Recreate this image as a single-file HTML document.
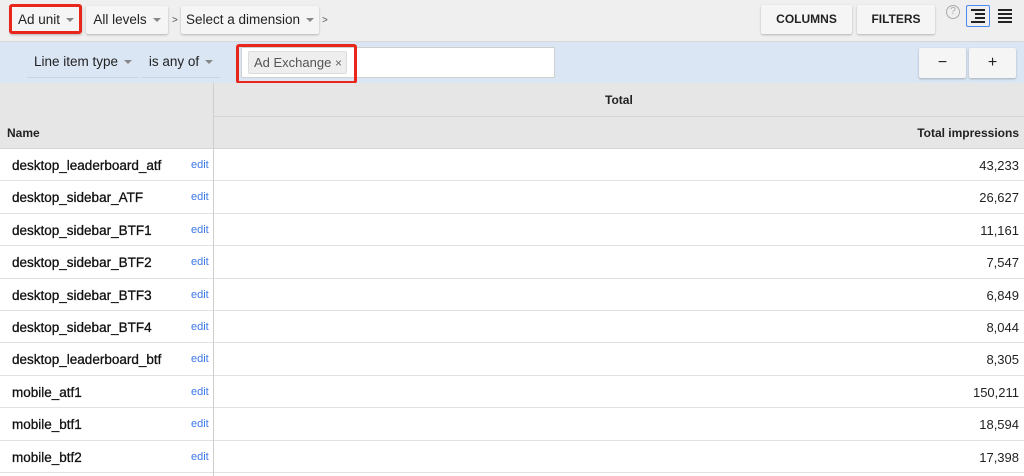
<!DOCTYPE html>
<html><head><style>
*{box-sizing:border-box;margin:0;padding:0}
body{width:1024px;height:476px;overflow:hidden;background:#fff;font-family:"Liberation Sans",Arial,sans-serif;font-size:13px;color:#222;position:relative}
.abs{position:absolute}
.top{left:0;top:0;width:1024px;height:42px;background:#efefef;border-bottom:1px solid #d8d8d8}
.btn{position:absolute;background:#f5f5f5;border-radius:2px;box-shadow:0 1px 2px rgba(0,0,0,.25);font-size:13.5px;line-height:28px;text-align:center;color:#222}
.car{display:inline-block;width:0;height:0;border-left:4px solid transparent;border-right:4px solid transparent;border-top:4px solid #888;vertical-align:middle;margin-left:6px}
.red{position:absolute;border:3px solid #e8261c;border-radius:3px}
.fb{left:0;top:42px;width:1024px;height:41px;background:#dbe6f5}
.hdr{left:0;top:83px;width:1024px;height:66px;background:#e6e6e6}
.row{position:absolute;left:0;width:1024px;height:32.4px;border-bottom:1px solid #e2e2e2;font-size:13px}
.row .n{position:absolute;left:12px;top:9px;font-size:13.5px;color:#111;-webkit-text-stroke:0.3px #111}
.row .e{position:absolute;left:191px;top:10px;font-size:11px;color:#3b78e7}
.row .v{position:absolute;right:5px;top:9px}
</style></head><body>
<div class="abs top"></div>
<div class="btn" style="left:10px;top:6px;width:72px">Ad unit<span class="car"></span></div>
<div class="red" style="left:9px;top:4px;width:73px;height:30px"></div>
<div class="btn" style="left:86px;top:6px;width:82px">All levels<span class="car"></span></div>
<div class="abs" style="left:172px;top:15px;font-size:10px;color:#555">&gt;</div>
<div class="btn" style="left:181px;top:6px;width:138px">Select a dimension<span class="car"></span></div>
<div class="abs" style="left:322px;top:15px;font-size:10px;color:#555">&gt;</div>
<div class="btn" style="left:761px;top:5px;width:91px;font-weight:bold;font-size:12px;line-height:29px">COLUMNS</div>
<div class="btn" style="left:857px;top:5px;width:78px;font-weight:bold;font-size:12px;line-height:29px">FILTERS</div>
<div class="abs" style="left:946px;top:5px;width:14px;height:14px;border:1px solid #aaa;border-radius:50%;font-size:10px;color:#aaa;text-align:center;line-height:12px">?</div>
<div class="abs" style="left:966px;top:5px;width:24px;height:22px;border:1px solid #4a8af4;border-radius:2px"></div>
<svg class="abs" style="left:970px;top:8px" width="16" height="16"><g stroke="#222" stroke-width="2"><line x1="1" y1="2" x2="15" y2="2"/><line x1="5" y1="6" x2="15" y2="6"/><line x1="5" y1="10" x2="15" y2="10"/><line x1="1" y1="14" x2="15" y2="14"/></g></svg>
<svg class="abs" style="left:997px;top:8px" width="16" height="16"><g stroke="#222" stroke-width="2"><line x1="1" y1="2" x2="15" y2="2"/><line x1="1" y1="6" x2="15" y2="6"/><line x1="1" y1="10" x2="15" y2="10"/><line x1="1" y1="14" x2="15" y2="14"/></g></svg>

<div class="abs fb"></div>
<div class="abs" style="left:27px;top:46px;width:112px;height:32px;border-bottom:1px solid #c9d3e2;line-height:32px;text-align:center;font-size:13.5px">Line item type<span class="car"></span></div>
<div class="abs" style="left:142px;top:46px;width:78px;height:32px;border-bottom:1px solid #c9d3e2;line-height:32px;text-align:center;font-size:13.5px">is any of<span class="car"></span></div>
<div class="abs" style="left:241px;top:47px;width:314px;height:31px;background:#fff;border:1px solid #d0d0d0"></div>
<div class="abs" style="left:248px;top:51px;width:99px;height:23px;background:#eee;border:1px solid #ddd;border-radius:2px;line-height:21px;padding-left:5px;color:#555">Ad Exchange <span style="font-size:12px;color:#666">×</span></div>
<div class="red" style="left:236px;top:44px;width:121px;height:40px"></div>
<div class="btn" style="left:919px;top:48px;width:47px;height:30px;line-height:30px;font-size:16px">−</div>
<div class="btn" style="left:969px;top:48px;width:47px;height:30px;line-height:30px;font-size:16px">+</div>

<div class="abs hdr"></div>
<div class="abs" style="left:214px;top:116px;width:810px;height:1px;background:#d5d5d5"></div>
<div class="abs" style="left:213px;top:83px;width:1px;height:393px;background:#cfcfcf;z-index:2"></div>
<div class="abs" style="left:605px;top:93px;font-weight:bold;font-size:12px">Total</div>
<div class="abs" style="left:7px;top:126px;font-weight:bold;font-size:12px">Name</div>
<div class="abs" style="right:5px;top:126px;font-weight:bold;font-size:12px">Total impressions</div>
<div class="abs" style="left:0;top:148px;width:1024px;height:1px;background:#d5d5d5"></div>

<div class="row" style="top:149px"><span class="n">desktop_leaderboard_atf</span><span class="e">edit</span><span class="v">43,233</span></div>
<div class="row" style="top:181.4px"><span class="n">desktop_sidebar_ATF</span><span class="e">edit</span><span class="v">26,627</span></div>
<div class="row" style="top:213.8px"><span class="n">desktop_sidebar_BTF1</span><span class="e">edit</span><span class="v">11,161</span></div>
<div class="row" style="top:246.2px"><span class="n">desktop_sidebar_BTF2</span><span class="e">edit</span><span class="v">7,547</span></div>
<div class="row" style="top:278.6px"><span class="n">desktop_sidebar_BTF3</span><span class="e">edit</span><span class="v">6,849</span></div>
<div class="row" style="top:311px"><span class="n">desktop_sidebar_BTF4</span><span class="e">edit</span><span class="v">8,044</span></div>
<div class="row" style="top:343.4px"><span class="n">desktop_leaderboard_btf</span><span class="e">edit</span><span class="v">8,305</span></div>
<div class="row" style="top:375.8px"><span class="n">mobile_atf1</span><span class="e">edit</span><span class="v">150,211</span></div>
<div class="row" style="top:408.2px"><span class="n">mobile_btf1</span><span class="e">edit</span><span class="v">18,594</span></div>
<div class="row" style="top:440.6px"><span class="n">mobile_btf2</span><span class="e">edit</span><span class="v">17,398</span></div>
</body></html>
